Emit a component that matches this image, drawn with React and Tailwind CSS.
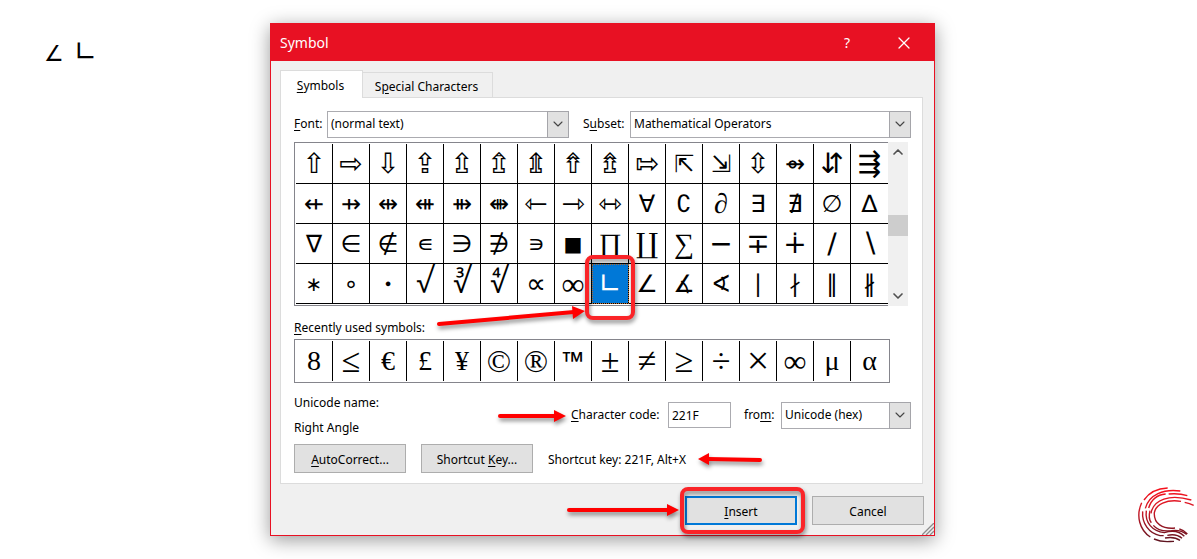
import { useState } from "react";
import { ChevronDown, ChevronUp, X } from "lucide-react";

const SYMBOLS = [
  ..."⇧⇨⇩⇪⇫⇬⇭⇮⇯⇰⇱⇲⇳⇴⇵⇶",
  ..."⇷⇸⇹⇺⇻⇼⇽⇾⇿∀∁∂∃∄∅∆",
  ..."∇∈∉∊∋∌∍■∏∐∑−∓∔∕∖",
  ..."∗∘∙√∛∜∝∞∟∠∡∢∣∤∥∦",
];

const RECENT = [..."8≤€£¥©®™±≠≥÷×∞μα"];

function symbolStyle(s) {
  if ("⇧⇨⇩⇪⇫⇬⇭⇮⇯⇰⇳⇽⇾⇿⇵⇶".includes(s)) return "font-['DejaVu_Sans',sans-serif] text-[28px]";
  if ("√∛∜".includes(s)) return "font-['Noto_Sans_Math','DejaVu_Sans',sans-serif] text-[28px]";
  if ("∏∐∑∂".includes(s)) return "font-['Liberation_Serif','DejaVu_Serif',serif] text-[28px]";
  if (s === "∞") return "font-['Liberation_Serif',serif] text-[32px]";
  if ("−∓∔∕∖∝∟".includes(s)) return "font-['DejaVu_Sans',sans-serif] text-[28px]";
  if ("■∗".includes(s)) return "font-['DejaVu_Sans',sans-serif] text-xl";
  if (s === "∙") return "font-['DejaVu_Sans',sans-serif] text-base";
  return "font-['DejaVu_Sans',sans-serif] text-2xl";
}

function recentStyle(s) {
  if (s === "™") return "font-['Noto_Sans',sans-serif] text-[28px]";
  if (s === "×") return "font-['Liberation_Serif',serif] text-[40px]";
  if ("≤≥±≠÷".includes(s)) return "font-['Liberation_Serif',serif] text-[34px]";
  if (s === "∞") return "font-['Liberation_Serif',serif] text-[32px]";
  if ("©®".includes(s)) return "font-['Liberation_Serif',serif] text-[32px]";
  return "font-['Liberation_Serif','DejaVu_Serif',serif] text-[28px]";
}

function Dropdown({ id, options, className }) {
  return (
    <div className={`relative h-[27px] ${className}`}>
      <select
        id={id}
        className="h-full w-full appearance-none rounded-none border border-[#ababb0] bg-white pl-[3px] pr-6 text-xs text-black"
      >
        {options.map((o) => (
          <option key={o}>{o}</option>
        ))}
      </select>
      <span className="pointer-events-none absolute inset-y-0 right-0 flex w-[22px] items-center justify-center border border-[#a5a5aa] bg-[#e1e1e1]">
        <ChevronDown className="size-4 text-[#444]" strokeWidth={1.6} />
      </span>
    </div>
  );
}

function SymbolGrid() {
  const [selected, setSelected] = useState(56);
  return (
    <div className="flex pr-[3px]">
      <div className="grid flex-1 grid-cols-16 border-y border-l border-[#85858c] py-px pl-px">
        {SYMBOLS.map((s, i) => {
          const active = i === selected;
          return (
            <button
              key={s}
              type="button"
              onClick={() => setSelected(i)}
              className={`flex h-10 items-center justify-center border-b border-black leading-none ${
                i % 16 === 15 ? "" : "border-r"
              } ${symbolStyle(s)} ${
                active ? "bg-[#0078d7] text-white outline-1 -outline-offset-1 outline-dotted outline-[#c07030]" : "text-black"
              }`}
            >
              {s}
            </button>
          );
        })}
      </div>
      <div className="flex w-5 flex-col items-center bg-[#f0f0f0] text-[#505050]">
        <button type="button" aria-label="Scroll up" className="flex h-5 items-center">
          <ChevronUp className="size-4" strokeWidth={2.5} />
        </button>
        <div className="flex w-full flex-1 flex-col">
          <div className="h-[53px]" />
          <div className="h-[21px] w-full bg-[#cdcdcd]" />
        </div>
        <button type="button" aria-label="Scroll down" className="flex h-5 items-center">
          <ChevronDown className="size-4" strokeWidth={2.5} />
        </button>
      </div>
    </div>
  );
}

function Annotations() {
  return (
    <svg
      aria-hidden="true"
      className="pointer-events-none absolute -left-px -top-px h-[513px] w-[665px] overflow-visible drop-shadow-[1px_3px_2px_rgba(0,0,0,0.45)]"
      viewBox="270 23 665 513"
    >
      <g fill="none" stroke="#fa2428" strokeWidth="4">
        <rect x="587" y="257" width="46" height="61" rx="6" />
        <rect x="682" y="489" width="121" height="43" rx="6" />
      </g>
      <g stroke="#ff0000" strokeWidth="4" strokeLinecap="round">
        <path d="M439 324 L574 312" />
        <path d="M500 416 H556" />
        <path d="M760 460 L708 459" />
        <path d="M569 510 H669" />
      </g>
      <g fill="#ff0000">
        <path d="M572 306 L585 311 L573 319 Z" />
        <path d="M554 410 L566 416 L554 422 Z" />
        <path d="M709 453 L698 459 L709 465 Z" />
        <path d="M667 504 L679 510 L667 516 Z" />
      </g>
    </svg>
  );
}

function SwirlLogo() {
  return (
    <svg aria-hidden="true" viewBox="52 48 174 174" className="size-[58px]" fill="none" strokeWidth="4.2">
      <defs>
        <linearGradient id="swirl" gradientUnits="userSpaceOnUse" x1="0" y1="60" x2="0" y2="215">
          <stop offset="0" stopColor="#f5101c" />
          <stop offset="0.35" stopColor="#d51826" />
          <stop offset="1" stopColor="#5e1420" />
        </linearGradient>
      </defs>
      <g stroke="url(#swirl)">
        <path d="M73 90 Q96 56 144 54" />
        <path d="M66 98 C48 138 60 180 92 201" />
        <path d="M77 115 C88 74 132 56 182 63" />
        <path d="M69 124 C66 160 88 190 121 197 L132 197" />
        <path d="M87 114 C95 88 114 74 138 72" />
        <path d="M147 72 Q178 69 203 77" />
        <path d="M80 122 C75 158 98 184 134 188 Q172 176 194 199" />
        <path d="M94 130 C101 88 150 71 215 90" />
        <path d="M91 122 C86 142 88 150 95 158" />
        <path d="M101 166 C116 184 138 184 155 182 Q182 178 201 193" />
        <path d="M184 94 C140 87 108 104 104 128 C102 160 128 178 166 174" />
        <path d="M195 97 Q210 100 222 106" />
        <path d="M179 177 Q194 181 203 192" />
        <path d="M143 196 Q170 190 187 205" />
        <path d="M103 207 C130 219 146 214 163 214" />
        <path d="M136 204 Q164 199 181 211" />
      </g>
    </svg>
  );
}

const buttonBase = "h-[29px] w-28 border border-[#adadad] bg-[#e1e1e1] pt-0.5 text-xs text-black";

export default function App() {
  return (
    <main className="flex min-h-screen bg-white font-['Noto_Sans','Open_Sans',sans-serif] text-xs text-black">
      <div className="w-[270px] shrink-0 pl-[44px] pt-10">
        <p className="flex items-baseline gap-2.5 font-['DejaVu_Sans',sans-serif] leading-6">
          <span className="text-[22px]">∠</span>
          <span className="text-[28px]">∟</span>
        </p>
      </div>

      <section
        role="dialog"
        aria-labelledby="dialog-title"
        className="relative mt-[23px] flex-1 self-start border border-[#e81123] bg-[#f0f0f0] shadow-[0_4px_18px_rgba(0,0,0,0.4)]"
      >
        <header className="flex h-[37px] items-center bg-[#e81123] pl-[9px] pr-5 text-white">
          <h1 id="dialog-title" className="flex-1 text-sm">Symbol</h1>
          <button type="button" aria-label="Help" className="mr-11 text-sm">?</button>
          <button type="button" aria-label="Close">
            <X className="size-5" strokeWidth={1.5} />
          </button>
        </header>

        <div className="px-[9px] pt-[9px]">
          <div role="tablist" className="flex items-end pr-0.5">
            <button
              role="tab"
              aria-selected="true"
              type="button"
              className="relative z-10 -mb-px h-7 w-[83px] border border-b-0 border-[#dcdcdc] bg-white pr-0.5 pt-0.5"
            >
              <u className="underline-offset-2">S</u>ymbols
            </button>
            <button role="tab" aria-selected="false" type="button" className="h-[25px] w-[130px] border border-b-0 border-l-0 border-[#dcdcdc] pr-0.5 pt-[3px]">
              S<u className="underline-offset-2">p</u>ecial Characters
            </button>
          </div>

          <div role="tabpanel" className="mr-0.5 border border-[#dcdcdc] bg-white pb-2.5 pl-[13px] pr-[11px] pt-3">
            <div className="mb-1 flex h-7 items-center">
              <label htmlFor="font" className="w-[33px]">
                <u className="underline-offset-2">F</u>ont:
              </label>
              <Dropdown id="font" options={["(normal text)"]} className="w-[242px]" />
              <label htmlFor="subset" className="ml-3.5 w-[47px]">
                S<u className="underline-offset-2">u</u>bset:
              </label>
              <Dropdown id="subset" options={["Mathematical Operators"]} className="flex-1" />
            </div>

            <SymbolGrid />

            <h2 className="mb-0.5 mt-[13px] leading-[18px]">
              <u className="underline-offset-2">R</u>ecently used symbols:
            </h2>
            <div className="mr-[21px] grid grid-cols-16 border border-[#85858c] p-px">
              {RECENT.map((s, i) => (
                <button
                  key={s}
                  type="button"
                  className={`flex h-10 items-center justify-center leading-none ${recentStyle(s)} ${
                    i === 15 ? "" : "border-r border-black"
                  }`}
                >
                  {s}
                </button>
              ))}
            </div>

            <div className="mt-[7px] flex items-center">
              <dl className="flex-1 leading-[25px]">
                <dt>Unicode name:</dt>
                <dd>Right Angle</dd>
              </dl>
              <label htmlFor="code" className="w-[97px]">
                <u className="underline-offset-2">C</u>haracter code:
              </label>
              <input
                id="code"
                type="text"
                defaultValue="221F"
                className="h-[26px] w-[63px] border border-[#ababb0] bg-white px-[3px] text-xs"
              />
              <label htmlFor="from" className="ml-[13px] w-[37px]">
                fro<u className="underline-offset-2">m</u>:
              </label>
              <Dropdown id="from" options={["Unicode (hex)"]} className="w-[130px]" />
            </div>

            <div className="mt-1 flex items-center gap-[15px]">
              <button type="button" className={buttonBase}>
                <u className="underline-offset-2">A</u>utoCorrect...
              </button>
              <button type="button" className={buttonBase}>
                Shortcut <u className="underline-offset-2">K</u>ey...
              </button>
              <p className="pt-0.5">Shortcut key: 221F, Alt+X</p>
            </div>
          </div>
        </div>

        <footer className="flex justify-end gap-[15px] pb-2.5 pr-2.5 pt-3">
          <button type="button" className="h-[29px] w-28 border-2 border-[#0078d7] bg-[#e1e1e1] pt-0.5 text-xs">
            <u className="underline-offset-2">I</u>nsert
          </button>
          <button type="button" className={buttonBase}>Cancel</button>
        </footer>

        <svg aria-hidden="true" className="absolute bottom-0 right-0 size-3" viewBox="0 0 12 12" stroke="#8c8c8c" strokeWidth="1.3">
          <path d="M0 12 L12 0 M4 12 L12 4 M8 12 L12 8" />
        </svg>
        <Annotations />
      </section>

      <aside className="flex w-[262px] shrink-0 items-end justify-end pb-[15px] pr-0.5">
        <SwirlLogo />
      </aside>
    </main>
  );
}
